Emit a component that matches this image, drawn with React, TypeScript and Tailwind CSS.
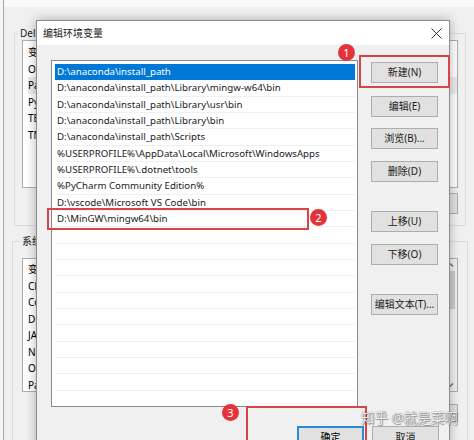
import React from "react"

const paths = [
  "D:\\anaconda\\install_path",
  "D:\\anaconda\\install_path\\Library\\mingw-w64\\bin",
  "D:\\anaconda\\install_path\\Library\\usr\\bin",
  "D:\\anaconda\\install_path\\Library\\bin",
  "D:\\anaconda\\install_path\\Scripts",
  "%USERPROFILE%\\AppData\\Local\\Microsoft\\WindowsApps",
  "%USERPROFILE%\\.dotnet\\tools",
  "%PyCharm Community Edition%",
  "D:\\vscode\\Microsoft VS Code\\bin",
  "D:\\MinGW\\mingw64\\bin",
]

const userVars = ["变量", "OneDrive", "Path", "PyCharm Community Edition", "TEMP", "TMP"]
const sysVars = ["变量", "CLASSPATH", "ComSpec", "DriverData", "JAVA_HOME", "NUMBER_OF_PROCESSORS", "OS", "Path"]

function WinButton({ label, className = "" }: { label: string; className?: string }) {
  return (
    <div
      className={`h-[21px] w-[67px] flex items-center justify-center bg-[#e1e1e1] border border-[#adadad] text-[10px] text-[#1a1a1a] whitespace-nowrap ${className}`}
    >
      {label}
    </div>
  )
}

function Badge({ n, className }: { n: string; className: string }) {
  return (
    <div
      className={`absolute w-[17px] h-[17px] rounded-full bg-[#e3343b] text-white text-[11px] leading-none flex items-center justify-center ${className}`}
    >
      {n}
    </div>
  )
}

export default function App() {
  const rows = Array.from({ length: 21 }, (_, i) => paths[i] ?? "")

  return (
    <div className="relative w-[474px] h-[440px] overflow-hidden bg-[#f6f6f6] font-['Noto_Sans','Noto_Sans_CJK_SC',sans-serif] text-black">
      {/* System properties window behind */}
      <div className="ml-[3px] h-full border-l border-[#a8a8a8] bg-[#f0f0f0]">
        <div className="h-[7px] bg-[#fafafa]" />

        <fieldset className="mt-[18px] ml-[10px] w-[452px] border border-[#dcdcdc] px-[7px] pb-[11px]">
          <legend className="ml-[-4px] px-[2px] text-[10px] leading-[16px] text-[#222]">Dell 的用户变量(U)</legend>
          <div className="mt-[-1px] h-[148px] bg-white border border-[#adadad] pl-[5px] pt-[3px]">
            {userVars.map((v, i) => (
              <div
                key={v}
                className={`h-[16.5px] text-[10px] leading-[16.5px] ${i === 2 ? "bg-[#ececec]" : ""}`}
              >
                {v}
              </div>
            ))}
          </div>
          <div className="mt-[5px] flex justify-end gap-[8px]">
            <WinButton label="新建(N)..." />
            <WinButton label="编辑(E)..." />
            <div className="h-[21px] w-[14px] bg-[#e1e1e1] border border-[#adadad]" />
          </div>
        </fieldset>

        <fieldset className="mt-[7px] ml-[8px] w-[456px] border border-[#dcdcdc] px-[9px] pb-[20px]">
          <legend className="ml-[-2px] px-[2px] text-[10px] leading-[16px] text-[#222]">系统变量(S)</legend>
          <div className="mt-[9px] h-[134px] bg-white border border-[#adadad] flex">
            <div className="flex-1 pl-[5px] pt-[2px]">
              {sysVars.map((v) => (
                <div key={v} className="h-[16.5px] text-[10px] leading-[16.5px]">
                  {v}
                </div>
              ))}
            </div>
            <div className="w-[14px] bg-[#f0f0f0] flex flex-col items-center">
              <svg className="mt-[3px]" width="8" height="6" viewBox="0 0 8 6">
                <path d="M1 4.5 L4 1.5 L7 4.5" fill="none" stroke="#606060" strokeWidth="1.2" />
              </svg>
              <div className="mt-[3px] h-[38px] w-[10px] bg-[#cdcdcd]" />
              <div className="flex-1" />
              <svg className="mb-[3px]" width="8" height="6" viewBox="0 0 8 6">
                <path d="M1 1.5 L4 4.5 L7 1.5" fill="none" stroke="#606060" strokeWidth="1.2" />
              </svg>
            </div>
          </div>
          <div className="mt-[12px] flex justify-end">
            <div className="h-[18px] w-[14px] bg-[#e1e1e1] border border-[#adadad]" />
          </div>
        </fieldset>
      </div>

      {/* Edit environment variable dialog */}
      <div className="absolute left-[36px] top-[20px] w-[414px] h-[440px] flex flex-col border border-[#8c8c8c] bg-[#f0f0f0] shadow-[0_0_10px_rgba(0,0,0,0.3)]">
        <div className="h-[24px] bg-white flex items-center">
          <span className="pl-[6px] flex-1 text-[10px] text-[#1a1a1a]">编辑环境变量</span>
          <svg className="mr-[7px]" width="11" height="11" viewBox="0 0 11 11">
            <path d="M0.5 0.5 L10.5 10.5 M10.5 0.5 L0.5 10.5" stroke="#333" strokeWidth="1" />
          </svg>
        </div>

        <div className="flex-1 flex flex-col pl-[14px] pr-[10px] pt-[15px]">
          <div className="flex gap-[13px]">
            <div className="w-[307px] h-[347px] bg-white border border-[#8a8a8a] p-[3px] pr-[2px] overflow-hidden">
              {rows.map((p, i) => (
                <div
                  key={i}
                  className={`h-[16.33px] px-[2px] text-[9.7px] leading-[16px] whitespace-nowrap ${
                    i === 0 ? "bg-[#0078d7] text-white" : "text-[#1a1a1a] border-b border-[#f0f0f0]"
                  }`}
                >
                  {p}
                </div>
              ))}
            </div>

            <div className="w-[67px] flex flex-col pt-[2px]">
              <WinButton label="新建(N)" />
              <WinButton label="编辑(E)" className="mt-[13px]" />
              <WinButton label="浏览(B)..." className="mt-[11px]" />
              <WinButton label="删除(D)" className="mt-[12px]" />
              <WinButton label="上移(U)" className="mt-[29px]" />
              <WinButton label="下移(O)" className="mt-[12px]" />
              <WinButton label="编辑文本(T)..." className="mt-[29px]" />
            </div>
          </div>

          <div className="mt-[19px] flex justify-end gap-[8px]">
            <div className="h-[22px] w-[67px] flex items-center justify-center bg-[#e1e1e1] border-2 border-[#2b8ad6] text-[10px]">
              确定
            </div>
            <WinButton label="取消" className="h-[22px]" />
          </div>
        </div>
      </div>

      {/* Annotations */}
      <div className="absolute left-[359px] top-[55px] w-[91px] h-[33px] border-2 border-[#d9444b]" />
      <div className="absolute left-[47px] top-[208px] w-[262px] h-[22px] border-2 border-[#d9444b]" />
      <div className="absolute left-[246px] top-[406px] w-[121px] h-[40px] border-2 border-[#d9444b]" />
      <Badge n="1" className="left-[338px] top-[44px]" />
      <Badge n="2" className="left-[310px] top-[209px]" />
      <Badge n="3" className="left-[222px] top-[404px]" />

      <div className="absolute left-[361px] top-[409px] text-[13.5px] leading-[18px] text-white/90 whitespace-nowrap [text-shadow:0_0_1px_rgba(0,0,0,0.7),1px_1px_1px_rgba(0,0,0,0.35)]">
        知乎 @就是菜啊
      </div>
    </div>
  )
}
